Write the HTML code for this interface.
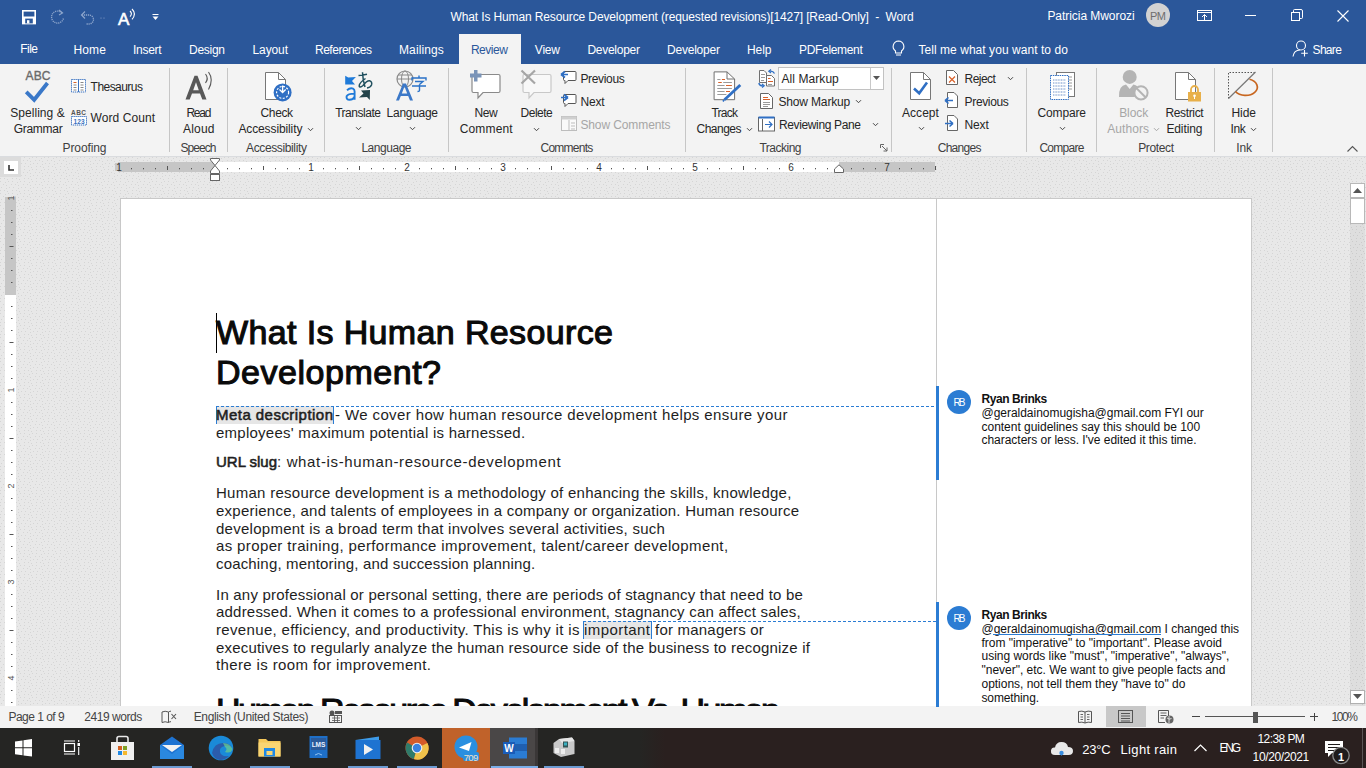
<!DOCTYPE html>
<html><head><meta charset="utf-8"><style>
html,body{margin:0;padding:0;width:1366px;height:768px;overflow:hidden;background:#fff;}
body{position:relative;font-family:"Liberation Sans",sans-serif;}
.t{position:absolute;white-space:pre;}
.r{position:absolute;}
svg.r{overflow:visible;}
</style></head><body>
<div class="r" style="left:0px;top:0px;width:1366px;height:64px;background:#2b579a;"></div>
<div class="r" style="left:0px;top:64px;width:1366px;height:92px;background:#f3f3f3;"></div>
<div class="r" style="left:0px;top:156px;width:1366px;height:1px;background:#dadcdf;"></div>
<svg class="r" style="left:0;top:157px" width="1366" height="549" shape-rendering="crispEdges"><defs><pattern id="dp" width="12" height="12" patternUnits="userSpaceOnUse"><rect width="12" height="12" fill="#e8e8e8"/><g fill="#d5d5d5"><rect x="0" y="0" width="1" height="1"/><rect x="5" y="1" width="1" height="1"/><rect x="8" y="0" width="1" height="1"/><rect x="3" y="3" width="1" height="1"/><rect x="6" y="4" width="1" height="1"/><rect x="11" y="3" width="1" height="1"/><rect x="1" y="6" width="1" height="1"/><rect x="6" y="7" width="1" height="1"/><rect x="9" y="6" width="1" height="1"/><rect x="4" y="9" width="1" height="1"/><rect x="7" y="10" width="1" height="1"/><rect x="0" y="9" width="1" height="1"/></g></pattern></defs><rect width="1366" height="549" fill="url(#dp)"/></svg>
<div class="r" style="left:0px;top:706px;width:1366px;height:22px;background:#f3f3f3;"></div>
<div class="r" style="left:0px;top:728px;width:1366px;height:40px;background:#2a201f;background:linear-gradient(90deg,#252523 0,#252523 640px,#2a201f 665px,#2a201f 100%);"></div>
<div class="t" style="left:450.50px;top:9.84px;font-size:12px;line-height:15px;color:#ffffff;font-weight:400;letter-spacing:-0.125px;">What Is Human Resource Development (requested revisions)[1427] [Read-Only]  -  Word</div>
<div class="t" style="left:1047.40px;top:9.34px;font-size:12px;line-height:15px;color:#ffffff;font-weight:400;letter-spacing:-0.049px;">Patricia Mworozi</div>
<svg class="r" style="left:1146px;top:3px;" width="24" height="24" viewBox="0 0 24 24"><circle cx="12" cy="12" r="12" fill="#d2d2d2"/></svg>
<div class="t" style="left:1150.00px;top:9.19px;font-size:11px;line-height:14px;color:#6e6e6e;font-weight:400;letter-spacing:-0.500px;">PM</div>
<svg class="r" style="left:1197px;top:10px;" width="15" height="11" viewBox="0 0 15 11"><rect x="0.5" y="0.5" width="14" height="10" fill="none" stroke="#fff" stroke-width="1"/><line x1="0.5" y1="2.5" x2="14.5" y2="2.5" stroke="#fff"/><path d="M7.5 4.5 L5 7 M7.5 4.5 L10 7 M7.5 4.5 V10" stroke="#fff" fill="none"/></svg>
<div class="r" style="left:1245px;top:15px;width:11px;height:1px;background:#fff;"></div>
<svg class="r" style="left:1291px;top:9px;" width="12" height="12" viewBox="0 0 12 12"><rect x="0.5" y="3.5" width="8" height="8" fill="none" stroke="#fff"/><path d="M2.5 3.5 V1.5 Q2.5 0.5 3.5 0.5 H10 Q11.5 0.5 11.5 2 V8.5 Q11.5 9.5 10.5 9.5 H8.5" fill="none" stroke="#fff"/></svg>
<svg class="r" style="left:1337px;top:10px;" width="12" height="12" viewBox="0 0 12 12"><path d="M0.5 0.5 L11.5 11.5 M11.5 0.5 L0.5 11.5" stroke="#fff" stroke-width="1.1"/></svg>
<svg class="r" style="left:21px;top:9px;" width="16" height="16" viewBox="0 0 16 16"><rect x="1.8" y="1.8" width="12.4" height="12.6" fill="none" stroke="#fff" stroke-width="1.6"/><rect x="1" y="7.5" width="14" height="7.7" fill="#fff"/><rect x="4.2" y="9.6" width="7.6" height="4.8" fill="#2b579a"/><rect x="6" y="11.2" width="2.4" height="3.2" fill="#fff"/></svg>
<svg class="r" style="left:50px;top:9px;" width="16" height="16" viewBox="0 0 16 16"><path d="M12 4 A6 6 0 1 0 13.5 9" fill="none" stroke="#8ea6cc" stroke-width="1.3" stroke-dasharray="1.2 0.8"/><path d="M9 1 L12.5 4 L9 6" fill="none" stroke="#8ea6cc" stroke-width="1.2"/></svg>
<svg class="r" style="left:79px;top:9px;" width="24" height="16" viewBox="0 0 24 16"><path d="M3 6 H10 A4.5 4.5 0 0 1 10 15 H7" fill="none" stroke="#8ea6cc" stroke-width="1.3" stroke-dasharray="1.2 0.8"/><path d="M6 2.5 L2.5 6 L6 9.5" fill="none" stroke="#8ea6cc" stroke-width="1.2"/><circle cx="22" cy="9" r="0.6" fill="#8ea6cc"/><circle cx="25" cy="9" r="0.6" fill="#8ea6cc"/></svg>
<div class="t" style="left:118.00px;top:9.11px;font-size:17px;line-height:21px;color:#ffffff;font-weight:400;letter-spacing:0.000px;-webkit-text-stroke:0.6px #fff;">A</div>
<svg class="r" style="left:129px;top:8px;" width="8" height="13" viewBox="0 0 8 13"><path d="M1 3 Q3.8 5.8 1 8.6" fill="none" stroke="#fff" stroke-width="1.1"/><path d="M3 1 Q7.8 5.8 3 11.4" fill="none" stroke="#fff" stroke-width="1.1"/></svg>
<svg class="r" style="left:152px;top:14px;" width="7" height="6" viewBox="0 0 7 6"><rect x="0.5" y="0" width="6" height="1" fill="#fff"/><path d="M0.5 2.5 H6.5 L3.5 6 Z" fill="#fff"/></svg>
<div class="t" style="left:20.20px;top:42.34px;font-size:12px;line-height:15px;color:#ffffff;font-weight:400;letter-spacing:-0.515px;">File</div>
<div class="t" style="left:73.40px;top:42.84px;font-size:12px;line-height:15px;color:#ffffff;font-weight:400;letter-spacing:0.195px;">Home</div>
<div class="t" style="left:133.00px;top:42.84px;font-size:12px;line-height:15px;color:#ffffff;font-weight:400;letter-spacing:-0.280px;">Insert</div>
<div class="t" style="left:189.00px;top:42.84px;font-size:12px;line-height:15px;color:#ffffff;font-weight:400;letter-spacing:-0.272px;">Design</div>
<div class="t" style="left:252.50px;top:42.84px;font-size:12px;line-height:15px;color:#ffffff;font-weight:400;letter-spacing:-0.103px;">Layout</div>
<div class="t" style="left:315.00px;top:42.84px;font-size:12px;line-height:15px;color:#ffffff;font-weight:400;letter-spacing:-0.484px;">References</div>
<div class="t" style="left:399.00px;top:42.84px;font-size:12px;line-height:15px;color:#ffffff;font-weight:400;letter-spacing:0.110px;">Mailings</div>
<div class="t" style="left:534.80px;top:42.84px;font-size:12px;line-height:15px;color:#ffffff;font-weight:400;letter-spacing:-0.199px;">View</div>
<div class="t" style="left:587.40px;top:42.84px;font-size:12px;line-height:15px;color:#ffffff;font-weight:400;letter-spacing:-0.263px;">Developer</div>
<div class="t" style="left:667.00px;top:42.84px;font-size:12px;line-height:15px;color:#ffffff;font-weight:400;letter-spacing:-0.213px;">Developer</div>
<div class="t" style="left:747.00px;top:42.84px;font-size:12px;line-height:15px;color:#ffffff;font-weight:400;letter-spacing:-0.062px;">Help</div>
<div class="t" style="left:799.00px;top:42.84px;font-size:12px;line-height:15px;color:#ffffff;font-weight:400;letter-spacing:-0.321px;">PDFelement</div>
<div class="r" style="left:459px;top:34px;width:62px;height:30px;background:#f3f3f3;"></div>
<div class="t" style="left:470.90px;top:42.84px;font-size:12px;line-height:15px;color:#2b579a;font-weight:400;letter-spacing:-0.472px;">Review</div>
<svg class="r" style="left:891px;top:40px;" width="15" height="18" viewBox="0 0 15 18"><path d="M7.5 1 A5.5 5.5 0 0 0 4.5 11 V13 H10.5 V11 A5.5 5.5 0 0 0 7.5 1 Z" fill="none" stroke="#fff" stroke-width="1.1"/><line x1="5" y1="15" x2="10" y2="15" stroke="#fff"/></svg>
<div class="t" style="left:918.40px;top:42.84px;font-size:12px;line-height:15px;color:#ffffff;font-weight:400;letter-spacing:0.053px;">Tell me what you want to do</div>
<svg class="r" style="left:1292px;top:40px;" width="18" height="17" viewBox="0 0 18 17"><circle cx="9" cy="5.5" r="4.5" fill="none" stroke="#fff" stroke-width="1.1"/><path d="M1 16.5 Q2 10 8 10" fill="none" stroke="#fff" stroke-width="1.1"/><path d="M12.5 10 V16.5 M9.2 13.2 H15.8" stroke="#fff" stroke-width="1.1"/></svg>
<div class="t" style="left:1312.60px;top:42.84px;font-size:12px;line-height:15px;color:#ffffff;font-weight:400;letter-spacing:-0.704px;">Share</div>
<div class="r" style="left:169px;top:68px;width:1px;height:84px;background:#c6c6c6;"></div>
<div class="r" style="left:227px;top:68px;width:1px;height:84px;background:#c6c6c6;"></div>
<div class="r" style="left:324px;top:68px;width:1px;height:84px;background:#c6c6c6;"></div>
<div class="r" style="left:448px;top:68px;width:1px;height:84px;background:#c6c6c6;"></div>
<div class="r" style="left:685px;top:68px;width:1px;height:84px;background:#c6c6c6;"></div>
<div class="r" style="left:891px;top:68px;width:1px;height:84px;background:#c6c6c6;"></div>
<div class="r" style="left:1026px;top:68px;width:1px;height:84px;background:#c6c6c6;"></div>
<div class="r" style="left:1096px;top:68px;width:1px;height:84px;background:#c6c6c6;"></div>
<div class="r" style="left:1214px;top:68px;width:1px;height:84px;background:#c6c6c6;"></div>
<div class="r" style="left:1272px;top:68px;width:1px;height:84px;background:#c6c6c6;"></div>
<div class="t" style="left:25.50px;top:69.34px;font-size:12px;line-height:15px;color:#6a6a6a;font-weight:400;letter-spacing:0.164px;-webkit-text-stroke:0.35px #6a6a6a;">ABC</div>
<svg class="r" style="left:24px;top:80px;" width="26" height="23" viewBox="0 0 26 23"><path d="M2.2 11.8 L10.2 19.8 L23.5 3" fill="none" stroke="#3a78c8" stroke-width="3.8"/></svg>
<div class="t" style="left:10.20px;top:106.14px;font-size:12px;line-height:15px;color:#262626;font-weight:400;letter-spacing:0.052px;">Spelling &amp;</div>
<div class="t" style="left:13.70px;top:122.04px;font-size:12px;line-height:15px;color:#262626;font-weight:400;letter-spacing:-0.279px;">Grammar</div>
<svg class="r" style="left:70px;top:78px;" width="17" height="15" viewBox="0 0 17 15"><rect x="1.5" y="1.5" width="14" height="12.5" fill="#fff" stroke="#3a72c0" stroke-dasharray="1.3 0.7"/><line x1="8.5" y1="1.5" x2="8.5" y2="14" stroke="#3a72c0"/><line x1="3.5" y1="4.5" x2="6.5" y2="4.5" stroke="#d9622b"/><line x1="3.5" y1="7" x2="6.5" y2="7" stroke="#888"/><line x1="3.5" y1="9.5" x2="6.5" y2="9.5" stroke="#888"/><line x1="3.5" y1="12" x2="6.5" y2="12" stroke="#888"/><line x1="10.5" y1="4.5" x2="13.5" y2="4.5" stroke="#888"/><line x1="10.5" y1="7" x2="13.5" y2="7" stroke="#888"/><line x1="10.5" y1="9.5" x2="13.5" y2="9.5" stroke="#888"/><line x1="10.5" y1="12" x2="13.5" y2="12" stroke="#888"/></svg>
<div class="t" style="left:90.60px;top:80.14px;font-size:12px;line-height:15px;color:#262626;font-weight:400;letter-spacing:-0.548px;">Thesaurus</div>
<div class="t" style="left:71.00px;top:108.75px;font-size:6.5px;line-height:8px;color:#555;font-weight:700;letter-spacing:0.469px;">ABC</div>
<svg class="r" style="left:70px;top:115px;" width="18" height="11" viewBox="0 0 18 11"><rect x="1.5" y="1.5" width="15" height="8.5" fill="#fff" stroke="#3a72c0" stroke-dasharray="1.3 0.7"/></svg>
<div class="t" style="left:73.50px;top:118.25px;font-size:6.5px;line-height:8px;color:#3a72c0;font-weight:700;letter-spacing:0.086px;">123</div>
<div class="t" style="left:90.60px;top:111.24px;font-size:12px;line-height:15px;color:#262626;font-weight:400;letter-spacing:0.067px;">Word Count</div>
<div class="t" style="left:62.60px;top:141.34px;font-size:12px;line-height:15px;color:#404040;font-weight:400;letter-spacing:-0.127px;">Proofing</div>
<svg class="r" style="left:184px;top:70px;" width="30" height="31" viewBox="0 0 30 31"><path d="M1.5 29.5 L10.5 5.8 L13.5 5.8 L22.5 29.5 L18.3 29.5 L16 23.5 L8 23.5 L5.7 29.5 Z M9.2 20.2 L14.8 20.2 L12 12.2 Z" fill="#585858" fill-rule="evenodd"/><path d="M21.5 4 Q25 8.5 21.5 13" fill="none" stroke="#585858" stroke-width="1.1"/><path d="M24.5 2 Q30 9.5 24.5 19.5" fill="none" stroke="#585858" stroke-width="1.1"/></svg>
<div class="t" style="left:186.40px;top:106.14px;font-size:12px;line-height:15px;color:#262626;font-weight:400;letter-spacing:-1.229px;">Read</div>
<div class="t" style="left:183.00px;top:122.04px;font-size:12px;line-height:15px;color:#262626;font-weight:400;letter-spacing:0.203px;">Aloud</div>
<div class="t" style="left:180.60px;top:141.34px;font-size:12px;line-height:15px;color:#404040;font-weight:400;letter-spacing:-0.997px;">Speech</div>
<svg class="r" style="left:264px;top:71px;" width="32" height="31" viewBox="0 0 32 31"><path d="M1.5 1.5 H14.5 L21.5 8.5 V28.5 H1.5 Z" fill="#fff" stroke="#777" stroke-width="1"/><path d="M14.5 1.5 V8.5 H21.5" fill="none" stroke="#777"/><circle cx="18.6" cy="21.4" r="9" fill="#2f6fc4"/><circle cx="18.6" cy="21.4" r="6" fill="none" stroke="#fff" stroke-width="1.2" stroke-dasharray="2 1.5"/><path d="M18.6 14.5 V21 M15.5 18.5 L18.6 21.5 L21.7 18.5" fill="none" stroke="#fff" stroke-width="1.3"/></svg>
<div class="t" style="left:260.60px;top:106.14px;font-size:12px;line-height:15px;color:#262626;font-weight:400;letter-spacing:-0.404px;">Check</div>
<div class="t" style="left:238.40px;top:122.04px;font-size:12px;line-height:15px;color:#262626;font-weight:400;letter-spacing:-0.113px;">Accessibility</div>
<svg class="r" style="left:307px;top:126.69999999999999px;" width="7" height="5" viewBox="0 0 7 5"><path d="M1 1.2 L3.5 3.7 L6 1.2" fill="none" stroke="#444" stroke-width="1"/></svg>
<div class="t" style="left:246.00px;top:141.34px;font-size:12px;line-height:15px;color:#404040;font-weight:400;letter-spacing:-0.372px;">Accessibility</div>
<svg class="r" style="left:344px;top:71px;" width="29" height="30" viewBox="0 0 29 30"><path d="M1.2 4.7 L4.2 6.4 L11.9 6.1 L8 10.1 L11 13.6 L1.2 13.6 Z" fill="#1e7ad9"/><path d="M3 19.2 Q6 16.6 9 17.6 Q10.6 18.4 10.6 20.5 V28.8 M10.4 22.6 Q4 22.6 2.6 25.2 Q2 28.6 5.6 28.8 Q9 28.8 10.4 26" fill="none" stroke="#1e7ad9" stroke-width="1.9"/><path d="M14.5 4.5 Q19 4.2 23 3.3 M18.5 1.2 Q18.8 9 21 16 M21.5 7.5 Q15 12 15.2 15 Q15.6 17.2 19 14.5 Q23 9.5 25.5 9.8 Q28.5 10.5 27.5 14 Q26.5 16.5 23 17" fill="none" stroke="#1f4f5e" stroke-width="1.5"/><path d="M17 19.5 L26 19 L25.8 28.9 L23 26 L15 26.5 L19.5 22.5 Z" fill="#23434a"/></svg>
<div class="t" style="left:335.20px;top:106.14px;font-size:12px;line-height:15px;color:#262626;font-weight:400;letter-spacing:-0.472px;">Translate</div>
<svg class="r" style="left:355px;top:126px;" width="7" height="5" viewBox="0 0 7 5"><path d="M1 1.2 L3.5 3.7 L6 1.2" fill="none" stroke="#444" stroke-width="1"/></svg>
<svg class="r" style="left:395px;top:70px;" width="34" height="32" viewBox="0 0 34 32"><circle cx="10" cy="9" r="8" fill="none" stroke="#8a8a8a" stroke-width="1.2"/><ellipse cx="10" cy="9" rx="3.5" ry="8" fill="none" stroke="#8a8a8a" stroke-width="1"/><line x1="2" y1="9" x2="18" y2="9" stroke="#8a8a8a"/><line x1="3" y1="5" x2="17" y2="5" stroke="#8a8a8a"/><path d="M1 30.5 L8 13.5 L11 13.5 L18 30.5 L15 30.5 L13.2 26 L5.8 26 L4 30.5 Z M6.8 23.5 L12.2 23.5 L9.5 16.5 Z" fill="#3b78c8" fill-rule="evenodd"/><path d="M24 5.5 V7.5 M17 10.5 V8 H31 V10.5 M20 11.5 H28 L24.5 14.5 M17 16 H31 M24.5 14.5 V20.5 Q24.5 21.5 22.5 21.5" fill="none" stroke="#2a72c8" stroke-width="1.4"/></svg>
<div class="t" style="left:386.60px;top:106.14px;font-size:12px;line-height:15px;color:#262626;font-weight:400;letter-spacing:-0.282px;">Language</div>
<svg class="r" style="left:408.5px;top:126px;" width="7" height="5" viewBox="0 0 7 5"><path d="M1 1.2 L3.5 3.7 L6 1.2" fill="none" stroke="#444" stroke-width="1"/></svg>
<div class="t" style="left:361.40px;top:141.34px;font-size:12px;line-height:15px;color:#404040;font-weight:400;letter-spacing:-0.468px;">Language</div>
<svg class="r" style="left:469px;top:69px;" width="33" height="31" viewBox="0 0 33 31"><path d="M3.5 5.5 H29.5 Q31 5.5 31 7 V22 Q31 23.5 29.5 23.5 H14 L9 29 L9 23.5 H4.5 Q3 23.5 3 22 V7 Q3 5.5 4.5 5.5 Z" fill="#fff" stroke="#8a8a8a" stroke-width="1.2"/><path d="M5 1 H8.5 V4.5 H12.5 V8.5 H8.5 V12.5 H5 V8.5 H1 V4.5 H5 Z" fill="#7a94b8"/></svg>
<div class="t" style="left:474.60px;top:106.14px;font-size:12px;line-height:15px;color:#262626;font-weight:400;letter-spacing:-0.408px;">New</div>
<div class="t" style="left:459.70px;top:122.04px;font-size:12px;line-height:15px;color:#262626;font-weight:400;letter-spacing:0.164px;">Comment</div>
<svg class="r" style="left:520px;top:69px;" width="33" height="31" viewBox="0 0 33 31"><path d="M4 5.5 H29.5 Q31 5.5 31 7 V22 Q31 23.5 29.5 23.5 H14 L9 29 L9 23.5 H4.5 Q3 23.5 3 22 V7 Q3 5.5 4 5.5 Z" fill="#f8f8f8" stroke="#c8c8c8" stroke-width="1.2"/><path d="M1.5 1.5 L15 14.5 M15 1.5 L1.5 14.5" stroke="#a6a6a6" stroke-width="2.2"/></svg>
<div class="t" style="left:520.60px;top:106.14px;font-size:12px;line-height:15px;color:#262626;font-weight:400;letter-spacing:-0.497px;">Delete</div>
<svg class="r" style="left:533.4px;top:126.69999999999999px;" width="7" height="5" viewBox="0 0 7 5"><path d="M1 1.2 L3.5 3.7 L6 1.2" fill="none" stroke="#444" stroke-width="1"/></svg>
<svg class="r" style="left:560px;top:70px;" width="17" height="15" viewBox="0 0 17 15"><path d="M4.5 1.5 H15 Q16 1.5 16 2.5 V9.5 Q16 10.5 15 10.5 H8 L5 13.5 V10.5 H4.5 Q3.5 10.5 3.5 9.5 V2.5 Q3.5 1.5 4.5 1.5 Z" fill="#fff" stroke="#555" stroke-width="1"/><path d="M1 4.5 L5 1.5 M1 4.5 L5 7.5 M1 4.5 H8" stroke="#2f6fc4" stroke-width="1.6" fill="none"/></svg>
<div class="t" style="left:580.40px;top:71.94px;font-size:12px;line-height:15px;color:#262626;font-weight:400;letter-spacing:-0.327px;">Previous</div>
<svg class="r" style="left:560px;top:93px;" width="17" height="15" viewBox="0 0 17 15"><path d="M4.5 1.5 H15 Q16 1.5 16 2.5 V9.5 Q16 10.5 15 10.5 H8 L5 13.5 V10.5 H4.5 Q3.5 10.5 3.5 9.5 V2.5 Q3.5 1.5 4.5 1.5 Z" fill="#fff" stroke="#555" stroke-width="1"/><path d="M8 4.5 L4 1.5 M8 4.5 L4 7.5 M1 4.5 H8" stroke="#2f6fc4" stroke-width="1.6" fill="none"/></svg>
<div class="t" style="left:580.40px;top:94.84px;font-size:12px;line-height:15px;color:#262626;font-weight:400;letter-spacing:-0.157px;">Next</div>
<svg class="r" style="left:561px;top:116px;" width="17" height="16" viewBox="0 0 17 16"><rect x="0.5" y="0.5" width="15" height="14" fill="#fafafa" stroke="#bdbdbd"/><rect x="0.5" y="0.5" width="15" height="3" fill="#cfcfcf"/><line x1="8" y1="4" x2="8" y2="14.5" stroke="#bdbdbd"/><line x1="10" y1="7" x2="14" y2="7" stroke="#bdbdbd"/><line x1="10" y1="10" x2="14" y2="10" stroke="#bdbdbd"/><line x1="10" y1="13" x2="14" y2="13" stroke="#bdbdbd"/></svg>
<div class="t" style="left:580.40px;top:117.84px;font-size:12px;line-height:15px;color:#a6a6a6;font-weight:400;letter-spacing:-0.105px;">Show Comments</div>
<div class="t" style="left:540.50px;top:141.34px;font-size:12px;line-height:15px;color:#404040;font-weight:400;letter-spacing:-0.759px;">Comments</div>
<svg class="r" style="left:712px;top:71px;" width="31" height="32" viewBox="0 0 31 32"><path d="M2.1 0.9 H15 L22.6 8 V28.7 H2.1 Z" fill="#fff" stroke="#707070"/><path d="M15 0.9 V8 H22.6" fill="none" stroke="#707070"/><line x1="5.3" y1="8.5" x2="8.5" y2="8.5" stroke="#9a9a9a" stroke-width="1"/><line x1="9.9" y1="8.5" x2="13" y2="8.5" stroke="#d9622b" stroke-width="1"/><line x1="6.2" y1="11.5" x2="9.8" y2="11.5" stroke="#d9622b" stroke-width="1"/><line x1="11.2" y1="11.5" x2="19.9" y2="11.5" stroke="#9a9a9a" stroke-width="1"/><line x1="5.3" y1="14.5" x2="12.6" y2="14.5" stroke="#9a9a9a" stroke-width="1"/><line x1="14" y1="14.5" x2="19.9" y2="14.5" stroke="#d9622b" stroke-width="1"/><line x1="5.3" y1="17.5" x2="19.9" y2="17.5" stroke="#9a9a9a" stroke-width="1"/><line x1="5.3" y1="20.5" x2="12.6" y2="20.5" stroke="#9a9a9a" stroke-width="1"/><line x1="14" y1="20.5" x2="18" y2="20.5" stroke="#d9622b" stroke-width="1"/><line x1="5.3" y1="23.5" x2="14.4" y2="23.5" stroke="#9a9a9a" stroke-width="1"/><path d="M12.5 28.8 L28.3 13.9" stroke="#2f6fc4" stroke-width="2.8"/><path d="M10.8 30.4 L12.3 29" stroke="#2f6fc4" stroke-width="1.6"/></svg>
<div class="t" style="left:711.50px;top:106.14px;font-size:12px;line-height:15px;color:#262626;font-weight:400;letter-spacing:-0.766px;">Track</div>
<div class="t" style="left:696.50px;top:122.04px;font-size:12px;line-height:15px;color:#262626;font-weight:400;letter-spacing:-0.505px;">Changes</div>
<svg class="r" style="left:746.2px;top:126.69999999999999px;" width="7" height="5" viewBox="0 0 7 5"><path d="M1 1.2 L3.5 3.7 L6 1.2" fill="none" stroke="#444" stroke-width="1"/></svg>
<svg class="r" style="left:758px;top:69px;" width="18" height="19" viewBox="0 0 18 19"><path d="M1.5 1.5 H6 L8.5 4 V13.5 H1.5 Z" fill="#fff" stroke="#707070"/><line x1="3" y1="5.5" x2="7" y2="5.5" stroke="#9a9a9a"/><line x1="3" y1="8.5" x2="7" y2="8.5" stroke="#9a9a9a"/><line x1="3" y1="11.5" x2="6" y2="11.5" stroke="#9a9a9a"/><path d="M8.5 6.5 H13.5 L16.5 9.5 V17 H8.5 Z" fill="#fff" stroke="#707070"/><line x1="10" y1="9.5" x2="12.5" y2="9.5" stroke="#d9622b"/><line x1="10" y1="12.5" x2="15" y2="12.5" stroke="#d9622b"/><line x1="10" y1="15.5" x2="14" y2="15.5" stroke="#9a9a9a"/><path d="M16.5 4.5 Q15 1.5 11.5 2.2" fill="none" stroke="#2f6fc4" stroke-width="1.3"/><path d="M13 0.5 L10.8 2.3 L13 4" fill="none" stroke="#2f6fc4" stroke-width="1.2"/><path d="M0.8 14 Q1.5 17.2 5.5 16.8" fill="none" stroke="#2f6fc4" stroke-width="1.3"/><path d="M4 15 L6.2 16.8 L4 18.5" fill="none" stroke="#2f6fc4" stroke-width="1.2"/></svg>
<div class="r" style="left:778px;top:67px;width:106px;height:23px;background:#fff;box-sizing:border-box;border:1px solid #c2c2c2;"></div>
<div class="r" style="left:870px;top:68px;width:1px;height:21px;background:#c8c8c8;"></div>
<svg class="r" style="left:873px;top:76px;" width="7" height="4" viewBox="0 0 7 4"><path d="M0 0 H7 L3.5 4 Z" fill="#555"/></svg>
<div class="t" style="left:781.50px;top:71.94px;font-size:12px;line-height:15px;color:#262626;font-weight:400;letter-spacing:0.068px;">All Markup</div>
<svg class="r" style="left:760px;top:93px;" width="13" height="16" viewBox="0 0 13 16"><path d="M0.5 0.5 H8.5 L12.5 4.5 V15.5 H0.5 Z" fill="#fff" stroke="#666"/><line x1="3" y1="4.5" x2="8" y2="4.5" stroke="#d9622b"/><line x1="3" y1="6.5" x2="10" y2="6.5" stroke="#d9622b"/><line x1="3" y1="9.5" x2="10" y2="9.5" stroke="#9a9a9a"/><line x1="3" y1="11.5" x2="10" y2="11.5" stroke="#9a9a9a"/><line x1="3" y1="13.5" x2="8" y2="13.5" stroke="#9a9a9a"/></svg>
<div class="t" style="left:778.40px;top:94.84px;font-size:12px;line-height:15px;color:#262626;font-weight:400;letter-spacing:-0.146px;">Show Markup</div>
<svg class="r" style="left:855.3px;top:99px;" width="7" height="5" viewBox="0 0 7 5"><path d="M1 1.2 L3.5 3.7 L6 1.2" fill="none" stroke="#444" stroke-width="1"/></svg>
<svg class="r" style="left:758px;top:116px;" width="18" height="16" viewBox="0 0 18 16"><rect x="0.5" y="1.5" width="16" height="13.5" fill="#fff" stroke="#666"/><rect x="0.5" y="0.5" width="16" height="2" fill="#2f6fc4"/><line x1="4.5" y1="3" x2="4.5" y2="15" stroke="#666"/><path d="M7 8.5 H14 M11 5.5 L14 8.5 L11 11.5" fill="none" stroke="#2f6fc4" stroke-width="1.2"/></svg>
<div class="t" style="left:778.90px;top:117.84px;font-size:12px;line-height:15px;color:#262626;font-weight:400;letter-spacing:-0.355px;">Reviewing Pane</div>
<svg class="r" style="left:872.2px;top:122px;" width="7" height="5" viewBox="0 0 7 5"><path d="M1 1.2 L3.5 3.7 L6 1.2" fill="none" stroke="#444" stroke-width="1"/></svg>
<div class="t" style="left:759.50px;top:141.34px;font-size:12px;line-height:15px;color:#404040;font-weight:400;letter-spacing:-0.511px;">Tracking</div>
<svg class="r" style="left:880px;top:144px;" width="8" height="8" viewBox="0 0 8 8"><path d="M0.5 0.5 H4 M0.5 0.5 V4 M2 2 L7 7 M7 3.5 V7 H3.5" fill="none" stroke="#666"/></svg>
<svg class="r" style="left:909px;top:71px;" width="23" height="30" viewBox="0 0 23 30"><path d="M1.5 1.5 H14.5 L21.5 8.5 V28.5 H1.5 Z" fill="#fff" stroke="#777"/><path d="M14.5 1.5 V8.5 H21.5" fill="none" stroke="#777"/><path d="M5 17.5 L10.2 22.2 L18 11.5" fill="none" stroke="#2f6fc4" stroke-width="2.6"/></svg>
<div class="t" style="left:902.00px;top:106.14px;font-size:12px;line-height:15px;color:#262626;font-weight:400;letter-spacing:0.046px;">Accept</div>
<svg class="r" style="left:917.7px;top:125.8px;" width="7" height="5" viewBox="0 0 7 5"><path d="M1 1.2 L3.5 3.7 L6 1.2" fill="none" stroke="#444" stroke-width="1"/></svg>
<svg class="r" style="left:946px;top:70px;" width="13" height="16" viewBox="0 0 13 16"><path d="M0.5 0.5 H7.5 L11.5 4.5 V14.5 H0.5 Z" fill="#fff" stroke="#666"/><path d="M3 6.5 L9 12.5 M9 6.5 L3 12.5" stroke="#d9622b" stroke-width="1.2"/></svg>
<div class="t" style="left:964.60px;top:71.94px;font-size:12px;line-height:15px;color:#262626;font-weight:400;letter-spacing:-0.563px;">Reject</div>
<svg class="r" style="left:1007px;top:75.6px;" width="7" height="5" viewBox="0 0 7 5"><path d="M1 1.2 L3.5 3.7 L6 1.2" fill="none" stroke="#444" stroke-width="1"/></svg>
<svg class="r" style="left:944px;top:92px;" width="15" height="17" viewBox="0 0 15 17"><path d="M3.5 0.5 H10 L13.5 4 V15.5 H3.5 Z" fill="#fff" stroke="#666"/><path d="M1 8.5 L4.5 5.5 M1 8.5 L4.5 11.5 M1 8.5 H9" fill="none" stroke="#2f6fc4" stroke-width="1.6"/></svg>
<div class="t" style="left:964.60px;top:94.84px;font-size:12px;line-height:15px;color:#262626;font-weight:400;letter-spacing:-0.355px;">Previous</div>
<svg class="r" style="left:944px;top:115px;" width="15" height="17" viewBox="0 0 15 17"><path d="M3.5 0.5 H10 L13.5 4 V15.5 H3.5 Z" fill="#fff" stroke="#666"/><path d="M9 8.5 L5.5 5.5 M9 8.5 L5.5 11.5 M1 8.5 H9" fill="none" stroke="#2f6fc4" stroke-width="1.6"/></svg>
<div class="t" style="left:964.60px;top:117.84px;font-size:12px;line-height:15px;color:#262626;font-weight:400;letter-spacing:-0.157px;">Next</div>
<div class="t" style="left:937.70px;top:141.34px;font-size:12px;line-height:15px;color:#404040;font-weight:400;letter-spacing:-0.705px;">Changes</div>
<svg class="r" style="left:1049px;top:71px;" width="27" height="30" viewBox="0 0 27 30"><rect x="7.5" y="1.5" width="18" height="24" fill="#fff" stroke="#777"/><line x1="10" y1="6" x2="23" y2="6" stroke="#999"/><line x1="10" y1="9" x2="23" y2="9" stroke="#999"/><line x1="10" y1="12" x2="23" y2="12" stroke="#999"/><line x1="10" y1="15" x2="23" y2="15" stroke="#999"/><line x1="10" y1="18" x2="23" y2="18" stroke="#999"/><rect x="1.5" y="4.5" width="18" height="24" fill="#fff" stroke="#2f6fc4" stroke-dasharray="1.5 0.8"/><line x1="4" y1="9" x2="17" y2="9" stroke="#6a8fc8" stroke-dasharray="1 0.6"/><line x1="4" y1="12" x2="17" y2="12" stroke="#6a8fc8" stroke-dasharray="1 0.6"/><line x1="4" y1="15" x2="17" y2="15" stroke="#6a8fc8" stroke-dasharray="1 0.6"/><line x1="4" y1="18" x2="17" y2="18" stroke="#6a8fc8" stroke-dasharray="1 0.6"/><line x1="4" y1="21" x2="17" y2="21" stroke="#6a8fc8" stroke-dasharray="1 0.6"/><line x1="4" y1="24" x2="17" y2="24" stroke="#6a8fc8" stroke-dasharray="1 0.6"/></svg>
<div class="t" style="left:1037.60px;top:106.14px;font-size:12px;line-height:15px;color:#262626;font-weight:400;letter-spacing:-0.160px;">Compare</div>
<svg class="r" style="left:1059.2px;top:125.8px;" width="7" height="5" viewBox="0 0 7 5"><path d="M1 1.2 L3.5 3.7 L6 1.2" fill="none" stroke="#444" stroke-width="1"/></svg>
<div class="t" style="left:1039.40px;top:141.34px;font-size:12px;line-height:15px;color:#404040;font-weight:400;letter-spacing:-0.710px;">Compare</div>
<svg class="r" style="left:1117px;top:69px;" width="35" height="33" viewBox="0 0 35 33"><circle cx="12.7" cy="7.9" r="7" fill="#b4b4b4"/><path d="M2 28 Q1.5 16.5 9 15.5 L12.7 20 L16.4 15.5 Q19 15.8 20.5 17.5 Q17 21 17.5 26 L18 28 Z" fill="#b4b4b4"/><circle cx="24" cy="23.8" r="6.6" fill="#f3f3f3" stroke="#b4b4b4" stroke-width="2"/><line x1="19.5" y1="19.3" x2="28.5" y2="28.3" stroke="#b4b4b4" stroke-width="2"/></svg>
<div class="t" style="left:1119.20px;top:106.14px;font-size:12px;line-height:15px;color:#a6a6a6;font-weight:400;letter-spacing:-0.086px;">Block</div>
<div class="t" style="left:1107.30px;top:122.04px;font-size:12px;line-height:15px;color:#a6a6a6;font-weight:400;letter-spacing:0.059px;">Authors</div>
<svg class="r" style="left:1153px;top:126.69999999999999px;" width="7" height="5" viewBox="0 0 7 5"><path d="M1 1.2 L3.5 3.7 L6 1.2" fill="none" stroke="#a6a6a6" stroke-width="1"/></svg>
<svg class="r" style="left:1174px;top:71px;" width="29" height="32" viewBox="0 0 29 32"><path d="M1.5 1.5 H14.5 L21.5 8.5 V28.5 H1.5 Z" fill="#fff" stroke="#777"/><path d="M14.5 1.5 V8.5 H21.5" fill="none" stroke="#777"/><path d="M17 21 V18.5 A3.5 3.5 0 0 1 24 18.5 V21" fill="none" stroke="#e8b04a" stroke-width="1.8"/><rect x="14" y="21" width="13" height="9.5" fill="#e8b04a"/><circle cx="20.5" cy="24.8" r="1.3" fill="#fff"/><rect x="20" y="25" width="1" height="3" fill="#fff"/></svg>
<div class="t" style="left:1165.40px;top:106.14px;font-size:12px;line-height:15px;color:#262626;font-weight:400;letter-spacing:-0.339px;">Restrict</div>
<div class="t" style="left:1166.40px;top:122.04px;font-size:12px;line-height:15px;color:#262626;font-weight:400;letter-spacing:-0.098px;">Editing</div>
<div class="t" style="left:1138.20px;top:141.34px;font-size:12px;line-height:15px;color:#404040;font-weight:400;letter-spacing:-0.367px;">Protect</div>
<svg class="r" style="left:1227px;top:71px;" width="34" height="29" viewBox="0 0 34 29"><path d="M1.5 27.5 V1.5 H28" fill="none" stroke="#555" stroke-dasharray="1.5 1.5"/><path d="M1.5 27.5 L28.5 1" stroke="#777" stroke-width="1.2"/><path d="M22.5 8.3 A11.8 8.3 0 1 1 8.5 20.5" fill="none" stroke="#c8661f" stroke-width="1.7"/><path d="M1.5 27.5 L6 1.5" stroke="none"/></svg>
<div class="t" style="left:1231.50px;top:106.14px;font-size:12px;line-height:15px;color:#262626;font-weight:400;letter-spacing:-0.062px;">Hide</div>
<div class="t" style="left:1230.50px;top:122.04px;font-size:12px;line-height:15px;color:#262626;font-weight:400;letter-spacing:-0.350px;">Ink</div>
<svg class="r" style="left:1250.1px;top:126.69999999999999px;" width="7" height="5" viewBox="0 0 7 5"><path d="M1 1.2 L3.5 3.7 L6 1.2" fill="none" stroke="#444" stroke-width="1"/></svg>
<div class="t" style="left:1236.20px;top:141.34px;font-size:12px;line-height:15px;color:#404040;font-weight:400;letter-spacing:-0.050px;">Ink</div>
<svg class="r" style="left:1347px;top:146px;" width="11" height="6" viewBox="0 0 11 6"><path d="M0.5 5.5 L5.5 0.5 L10.5 5.5" fill="none" stroke="#555" stroke-width="1.1"/></svg>
<div class="r" style="left:0px;top:157px;width:21px;height:20px;background:#dcdcdc;"></div>
<div class="r" style="left:4px;top:161px;width:14px;height:13px;background:#ffffff;"></div>
<svg class="r" style="left:8px;top:165px;" width="6" height="6" viewBox="0 0 6 6"><path d="M1 0 V5 H6" fill="none" stroke="#333" stroke-width="1.6"/></svg>
<div class="r" style="left:118px;top:162px;width:97px;height:10px;background:#c6c6c6;"></div>
<div class="r" style="left:215px;top:162px;width:624px;height:10px;background:#ffffff;"></div>
<div class="r" style="left:839px;top:162px;width:96px;height:10px;background:#c6c6c6;"></div>
<svg class="r" style="left:119px;top:162px;" width="816" height="10" viewBox="0 0 816 10"><rect x="12" y="6" width="1" height="1.3" fill="#555"/><rect x="24" y="6" width="1" height="1.3" fill="#555"/><rect x="36" y="6" width="1" height="1.3" fill="#555"/><rect x="48" y="4" width="1" height="4" fill="#555"/><rect x="60" y="6" width="1" height="1.3" fill="#555"/><rect x="72" y="6" width="1" height="1.3" fill="#555"/><rect x="84" y="6" width="1" height="1.3" fill="#555"/><rect x="108" y="6" width="1" height="1.3" fill="#555"/><rect x="120" y="6" width="1" height="1.3" fill="#555"/><rect x="132" y="6" width="1" height="1.3" fill="#555"/><rect x="144" y="4" width="1" height="4" fill="#555"/><rect x="156" y="6" width="1" height="1.3" fill="#555"/><rect x="168" y="6" width="1" height="1.3" fill="#555"/><rect x="180" y="6" width="1" height="1.3" fill="#555"/><rect x="204" y="6" width="1" height="1.3" fill="#555"/><rect x="216" y="6" width="1" height="1.3" fill="#555"/><rect x="228" y="6" width="1" height="1.3" fill="#555"/><rect x="240" y="4" width="1" height="4" fill="#555"/><rect x="252" y="6" width="1" height="1.3" fill="#555"/><rect x="264" y="6" width="1" height="1.3" fill="#555"/><rect x="276" y="6" width="1" height="1.3" fill="#555"/><rect x="300" y="6" width="1" height="1.3" fill="#555"/><rect x="312" y="6" width="1" height="1.3" fill="#555"/><rect x="324" y="6" width="1" height="1.3" fill="#555"/><rect x="336" y="4" width="1" height="4" fill="#555"/><rect x="348" y="6" width="1" height="1.3" fill="#555"/><rect x="360" y="6" width="1" height="1.3" fill="#555"/><rect x="372" y="6" width="1" height="1.3" fill="#555"/><rect x="396" y="6" width="1" height="1.3" fill="#555"/><rect x="408" y="6" width="1" height="1.3" fill="#555"/><rect x="420" y="6" width="1" height="1.3" fill="#555"/><rect x="432" y="4" width="1" height="4" fill="#555"/><rect x="444" y="6" width="1" height="1.3" fill="#555"/><rect x="456" y="6" width="1" height="1.3" fill="#555"/><rect x="468" y="6" width="1" height="1.3" fill="#555"/><rect x="492" y="6" width="1" height="1.3" fill="#555"/><rect x="504" y="6" width="1" height="1.3" fill="#555"/><rect x="516" y="6" width="1" height="1.3" fill="#555"/><rect x="528" y="4" width="1" height="4" fill="#555"/><rect x="540" y="6" width="1" height="1.3" fill="#555"/><rect x="552" y="6" width="1" height="1.3" fill="#555"/><rect x="564" y="6" width="1" height="1.3" fill="#555"/><rect x="588" y="6" width="1" height="1.3" fill="#555"/><rect x="600" y="6" width="1" height="1.3" fill="#555"/><rect x="612" y="6" width="1" height="1.3" fill="#555"/><rect x="624" y="4" width="1" height="4" fill="#555"/><rect x="636" y="6" width="1" height="1.3" fill="#555"/><rect x="648" y="6" width="1" height="1.3" fill="#555"/><rect x="660" y="6" width="1" height="1.3" fill="#555"/><rect x="684" y="6" width="1" height="1.3" fill="#555"/><rect x="696" y="6" width="1" height="1.3" fill="#555"/><rect x="708" y="6" width="1" height="1.3" fill="#555"/><rect x="720" y="4" width="1" height="4" fill="#555"/><rect x="732" y="6" width="1" height="1.3" fill="#555"/><rect x="744" y="6" width="1" height="1.3" fill="#555"/><rect x="756" y="6" width="1" height="1.3" fill="#555"/><rect x="780" y="6" width="1" height="1.3" fill="#555"/><rect x="792" y="6" width="1" height="1.3" fill="#555"/><rect x="804" y="6" width="1" height="1.3" fill="#555"/><rect x="816" y="4" width="1" height="4" fill="#555"/></svg>
<div class="r" style="left:115px;top:163px;width:9px;height:8px;background:#c6c6c6;"></div>
<div class="t" style="left:116.22px;top:162.03px;font-size:10px;line-height:12px;color:#333;font-weight:400;letter-spacing:0.000px;">1</div>
<div class="r" style="left:307px;top:163px;width:9px;height:8px;background:#ffffff;"></div>
<div class="t" style="left:308.22px;top:162.03px;font-size:10px;line-height:12px;color:#333;font-weight:400;letter-spacing:0.000px;">1</div>
<div class="r" style="left:403px;top:163px;width:9px;height:8px;background:#ffffff;"></div>
<div class="t" style="left:404.22px;top:162.03px;font-size:10px;line-height:12px;color:#333;font-weight:400;letter-spacing:0.000px;">2</div>
<div class="r" style="left:499px;top:163px;width:9px;height:8px;background:#ffffff;"></div>
<div class="t" style="left:500.22px;top:162.03px;font-size:10px;line-height:12px;color:#333;font-weight:400;letter-spacing:0.000px;">3</div>
<div class="r" style="left:595px;top:163px;width:9px;height:8px;background:#ffffff;"></div>
<div class="t" style="left:596.22px;top:162.03px;font-size:10px;line-height:12px;color:#333;font-weight:400;letter-spacing:0.000px;">4</div>
<div class="r" style="left:691px;top:163px;width:9px;height:8px;background:#ffffff;"></div>
<div class="t" style="left:692.22px;top:162.03px;font-size:10px;line-height:12px;color:#333;font-weight:400;letter-spacing:0.000px;">5</div>
<div class="r" style="left:787px;top:163px;width:9px;height:8px;background:#ffffff;"></div>
<div class="t" style="left:788.22px;top:162.03px;font-size:10px;line-height:12px;color:#333;font-weight:400;letter-spacing:0.000px;">6</div>
<div class="r" style="left:883px;top:163px;width:9px;height:8px;background:#c6c6c6;"></div>
<div class="t" style="left:884.22px;top:162.03px;font-size:10px;line-height:12px;color:#333;font-weight:400;letter-spacing:0.000px;">7</div>
<svg class="r" style="left:210px;top:158px;" width="11" height="24" viewBox="0 0 11 24"><path d="M0.5 0.5 H9.5 V2 L5 7.5 L9.5 13 V15.5 H0.5 V13 L5 7.5 L0.5 2 Z" fill="#fff" stroke="#666"/><rect x="0.5" y="16.5" width="9" height="6" fill="#fff" stroke="#666"/></svg>
<svg class="r" style="left:834px;top:164px;" width="11" height="9" viewBox="0 0 11 9"><path d="M0.5 8.5 V5 L5 0.8 L9.5 5 V8.5 Z" fill="#fff" stroke="#666"/></svg>
<div class="r" style="left:5px;top:197px;width:11px;height:509px;background:#c6c6c6;"></div>
<div class="r" style="left:5px;top:295px;width:11px;height:411px;background:#ffffff;"></div>
<svg class="r" style="left:5px;top:197px;" width="11" height="509" viewBox="0 0 11 509"><rect x="6" y="13" width="1.5" height="1" fill="#555"/><rect x="6" y="25" width="1.5" height="1" fill="#555"/><rect x="6" y="37" width="1.5" height="1" fill="#555"/><rect x="4.5" y="49" width="4" height="1" fill="#555"/><rect x="6" y="61" width="1.5" height="1" fill="#555"/><rect x="6" y="73" width="1.5" height="1" fill="#555"/><rect x="6" y="85" width="1.5" height="1" fill="#555"/><rect x="6" y="109" width="1.5" height="1" fill="#555"/><rect x="6" y="121" width="1.5" height="1" fill="#555"/><rect x="6" y="133" width="1.5" height="1" fill="#555"/><rect x="4.5" y="145" width="4" height="1" fill="#555"/><rect x="6" y="157" width="1.5" height="1" fill="#555"/><rect x="6" y="169" width="1.5" height="1" fill="#555"/><rect x="6" y="181" width="1.5" height="1" fill="#555"/><rect x="6" y="205" width="1.5" height="1" fill="#555"/><rect x="6" y="217" width="1.5" height="1" fill="#555"/><rect x="6" y="229" width="1.5" height="1" fill="#555"/><rect x="4.5" y="241" width="4" height="1" fill="#555"/><rect x="6" y="253" width="1.5" height="1" fill="#555"/><rect x="6" y="265" width="1.5" height="1" fill="#555"/><rect x="6" y="277" width="1.5" height="1" fill="#555"/><rect x="6" y="301" width="1.5" height="1" fill="#555"/><rect x="6" y="313" width="1.5" height="1" fill="#555"/><rect x="6" y="325" width="1.5" height="1" fill="#555"/><rect x="4.5" y="337" width="4" height="1" fill="#555"/><rect x="6" y="349" width="1.5" height="1" fill="#555"/><rect x="6" y="361" width="1.5" height="1" fill="#555"/><rect x="6" y="373" width="1.5" height="1" fill="#555"/><rect x="6" y="397" width="1.5" height="1" fill="#555"/><rect x="6" y="409" width="1.5" height="1" fill="#555"/><rect x="6" y="421" width="1.5" height="1" fill="#555"/><rect x="4.5" y="433" width="4" height="1" fill="#555"/><rect x="6" y="445" width="1.5" height="1" fill="#555"/><rect x="6" y="457" width="1.5" height="1" fill="#555"/><rect x="6" y="469" width="1.5" height="1" fill="#555"/><rect x="6" y="493" width="1.5" height="1" fill="#555"/><rect x="6" y="505" width="1.5" height="1" fill="#555"/></svg>
<svg class="r" style="left:6px;top:194px;" width="9" height="8" viewBox="0 0 9 8"><text x="4.5" y="7.5" transform="rotate(-90 4.5 4)" font-family="Liberation Sans" font-size="9" fill="#555" text-anchor="middle">1</text></svg>
<svg class="r" style="left:6px;top:386px;" width="9" height="8" viewBox="0 0 9 8"><text x="4.5" y="7.5" transform="rotate(-90 4.5 4)" font-family="Liberation Sans" font-size="9" fill="#555" text-anchor="middle">1</text></svg>
<svg class="r" style="left:6px;top:482px;" width="9" height="8" viewBox="0 0 9 8"><text x="4.5" y="7.5" transform="rotate(-90 4.5 4)" font-family="Liberation Sans" font-size="9" fill="#555" text-anchor="middle">2</text></svg>
<svg class="r" style="left:6px;top:578px;" width="9" height="8" viewBox="0 0 9 8"><text x="4.5" y="7.5" transform="rotate(-90 4.5 4)" font-family="Liberation Sans" font-size="9" fill="#555" text-anchor="middle">3</text></svg>
<svg class="r" style="left:6px;top:674px;" width="9" height="8" viewBox="0 0 9 8"><text x="4.5" y="7.5" transform="rotate(-90 4.5 4)" font-family="Liberation Sans" font-size="9" fill="#555" text-anchor="middle">4</text></svg>
<div class="r" style="left:120px;top:198px;width:1132px;height:508px;background:#ffffff;box-sizing:border-box;border-left:1px solid #c8c8c8;border-top:1px solid #c8c8c8;border-right:1px solid #c8c8c8;"></div>
<div class="r" style="left:936px;top:199px;width:1px;height:507px;background:#c8c8c8;"></div>
<div class="r" style="left:216px;top:313px;width:1px;height:40px;background:#000;"></div>
<div class="t" style="left:216.00px;top:310.92px;font-size:34px;line-height:42px;color:#0a0a0a;font-weight:400;letter-spacing:0.368px;-webkit-text-stroke:1.1px #0a0a0a;">What Is Human Resource</div>
<div class="t" style="left:216.00px;top:351.12px;font-size:34px;line-height:42px;color:#0a0a0a;font-weight:400;letter-spacing:0.526px;-webkit-text-stroke:1.1px #0a0a0a;">Development?</div>
<div class="r" style="left:216px;top:406px;width:118px;height:18px;background:#e6e6e6;"></div>
<div class="r" style="left:216px;top:406px;width:1px;height:18px;background:#2b7cd3;"></div>
<div class="r" style="left:333px;top:406px;width:1px;height:18px;background:#2b7cd3;"></div>
<div class="t" style="left:216.00px;top:404.90px;font-size:15px;line-height:19px;color:#1e1e1e;font-weight:400;letter-spacing:0.461px;-webkit-text-stroke:0.55px #1e1e1e;">Meta description</div>
<div class="t" style="left:335.00px;top:404.90px;font-size:15px;line-height:19px;color:#1e1e1e;font-weight:400;letter-spacing:0.387px;">- We cover how human resource development helps ensure your</div>
<svg class="r" style="left:216px;top:405px;" width="721" height="2" viewBox="0 0 721 2"><line x1="0" y1="1.5" x2="721" y2="1.5" stroke="#2b7cd3" stroke-width="1" stroke-dasharray="3 2"/></svg>
<div class="t" style="left:216.00px;top:422.50px;font-size:15px;line-height:19px;color:#1e1e1e;font-weight:400;letter-spacing:0.251px;">employees&#x27; maximum potential is harnessed.</div>
<div class="t" style="left:216.00px;top:452.20px;font-size:15px;line-height:19px;color:#1e1e1e;font-weight:400;letter-spacing:-0.018px;-webkit-text-stroke:0.55px #1e1e1e;">URL slug</div>
<div class="t" style="left:277.00px;top:452.20px;font-size:15px;line-height:19px;color:#1e1e1e;font-weight:400;letter-spacing:0.648px;">: what-is-human-resource-development</div>
<div class="t" style="left:216.00px;top:483.40px;font-size:15px;line-height:19px;color:#1e1e1e;font-weight:400;letter-spacing:0.268px;">Human resource development is a methodology of enhancing the skills, knowledge,</div>
<div class="t" style="left:216.00px;top:500.98px;font-size:15px;line-height:19px;color:#1e1e1e;font-weight:400;letter-spacing:0.232px;">experience, and talents of employees in a company or organization. Human resource</div>
<div class="t" style="left:216.00px;top:518.56px;font-size:15px;line-height:19px;color:#1e1e1e;font-weight:400;letter-spacing:0.262px;">development is a broad term that involves several activities, such</div>
<div class="t" style="left:216.00px;top:536.14px;font-size:15px;line-height:19px;color:#1e1e1e;font-weight:400;letter-spacing:0.371px;">as proper training, performance improvement, talent/career development,</div>
<div class="t" style="left:216.00px;top:553.72px;font-size:15px;line-height:19px;color:#1e1e1e;font-weight:400;letter-spacing:0.168px;">coaching, mentoring, and succession planning.</div>
<div class="t" style="left:216.00px;top:584.90px;font-size:15px;line-height:19px;color:#1e1e1e;font-weight:400;letter-spacing:0.211px;">In any professional or personal setting, there are periods of stagnancy that need to be</div>
<div class="t" style="left:216.00px;top:602.48px;font-size:15px;line-height:19px;color:#1e1e1e;font-weight:400;letter-spacing:0.209px;">addressed. When it comes to a professional environment, stagnancy can affect sales,</div>
<div class="r" style="left:583px;top:621px;width:69px;height:18px;background:#e6e6e6;"></div>
<div class="r" style="left:583px;top:621px;width:1px;height:18px;background:#2b7cd3;"></div>
<div class="r" style="left:651px;top:621px;width:1px;height:18px;background:#2b7cd3;"></div>
<div class="t" style="left:216.00px;top:620.06px;font-size:15px;line-height:19px;color:#1e1e1e;font-weight:400;letter-spacing:0.337px;">revenue, efficiency, and productivity. This is why it is</div>
<div class="t" style="left:584.00px;top:620.06px;font-size:15px;line-height:19px;color:#1e1e1e;font-weight:400;letter-spacing:0.432px;">important</div>
<div class="t" style="left:655.00px;top:620.06px;font-size:15px;line-height:19px;color:#1e1e1e;font-weight:400;letter-spacing:0.213px;">for managers or</div>
<svg class="r" style="left:583px;top:620px;" width="354" height="2" viewBox="0 0 354 2"><line x1="0" y1="1.5" x2="354" y2="1.5" stroke="#2b7cd3" stroke-width="1" stroke-dasharray="3 2"/></svg>
<div class="t" style="left:216.00px;top:637.64px;font-size:15px;line-height:19px;color:#1e1e1e;font-weight:400;letter-spacing:0.196px;">executives to regularly analyze the human resource side of the business to recognize if</div>
<div class="t" style="left:216.00px;top:655.22px;font-size:15px;line-height:19px;color:#1e1e1e;font-weight:400;letter-spacing:0.372px;">there is room for improvement.</div>
<div class="r" style="left:121px;top:680px;width:815px;height:26px;overflow:hidden;">
<div class="t" style="left:95.00px;top:8.72px;font-size:34px;line-height:42px;color:#0a0a0a;font-weight:400;letter-spacing:-2.513px;-webkit-text-stroke:1.1px #0a0a0a;">Human Resource Development Vs. Human</div>
</div>
<div class="r" style="left:936px;top:386px;width:3px;height:94px;background:#2b7cd3;"></div>
<svg class="r" style="left:947px;top:390px;" width="24" height="24" viewBox="0 0 24 24"><circle cx="12" cy="12" r="12" fill="#2b7cd3"/></svg>
<div class="t" style="left:953.50px;top:397.04px;font-size:10px;line-height:12px;color:#ffffff;font-weight:400;letter-spacing:-1.891px;">RB</div>
<div class="t" style="left:981.50px;top:391.84px;font-size:12px;line-height:15px;color:#111;font-weight:700;letter-spacing:-0.432px;">Ryan Brinks</div>
<div class="t" style="left:981.50px;top:405.84px;font-size:12px;line-height:15px;color:#111;font-weight:400;letter-spacing:-0.026px;">@geraldainomugisha@gmail.com FYI our</div>
<div class="t" style="left:981.50px;top:419.62px;font-size:12px;line-height:15px;color:#111;font-weight:400;letter-spacing:-0.021px;">content guidelines say this should be 100</div>
<div class="t" style="left:981.50px;top:433.40px;font-size:12px;line-height:15px;color:#111;font-weight:400;letter-spacing:-0.030px;">characters or less. I&#x27;ve edited it this time.</div>
<div class="r" style="left:936px;top:602px;width:3px;height:105px;background:#2b7cd3;"></div>
<svg class="r" style="left:947px;top:606px;" width="24" height="24" viewBox="0 0 24 24"><circle cx="12" cy="12" r="12" fill="#2b7cd3"/></svg>
<div class="t" style="left:953.50px;top:613.03px;font-size:10px;line-height:12px;color:#ffffff;font-weight:400;letter-spacing:-1.891px;">RB</div>
<div class="t" style="left:981.50px;top:607.84px;font-size:12px;line-height:15px;color:#111;font-weight:700;letter-spacing:-0.432px;">Ryan Brinks</div>
<div class="t" style="left:981.50px;top:621.84px;font-size:12px;line-height:15px;color:#111;font-weight:400;letter-spacing:-0.023px;">@geraldainomugisha@gmail.com I changed this</div>
<div class="t" style="left:981.50px;top:635.62px;font-size:12px;line-height:15px;color:#111;font-weight:400;letter-spacing:-0.028px;">from &quot;imperative&quot; to &quot;important&quot;. Please avoid</div>
<div class="t" style="left:981.50px;top:649.40px;font-size:12px;line-height:15px;color:#111;font-weight:400;letter-spacing:-0.023px;">using words like &quot;must&quot;, &quot;imperative&quot;, &quot;always&quot;,</div>
<div class="t" style="left:981.50px;top:663.18px;font-size:12px;line-height:15px;color:#111;font-weight:400;letter-spacing:-0.014px;">&quot;never&quot;, etc. We want to give people facts and</div>
<div class="t" style="left:981.50px;top:676.96px;font-size:12px;line-height:15px;color:#111;font-weight:400;letter-spacing:-0.020px;">options, not tell them they &quot;have to&quot; do</div>
<div class="t" style="left:981.50px;top:690.74px;font-size:12px;line-height:15px;color:#111;font-weight:400;letter-spacing:-0.132px;">something.</div>
<div class="r" style="left:993px;top:634px;width:168px;height:1px;background:#2b7cd3;"></div>
<div class="r" style="left:1350px;top:183px;width:15px;height:523px;background:rgba(0,0,0,0.045);"></div>
<div class="r" style="left:1350px;top:183px;width:15px;height:15px;background:#ffffff;box-sizing:border-box;border:1px solid #b8b8b8;"></div>
<svg class="r" style="left:1353px;top:188px;" width="9" height="5" viewBox="0 0 9 5"><path d="M0 5 L4.5 0 L9 5 Z" fill="#555"/></svg>
<div class="r" style="left:1350px;top:198px;width:15px;height:26px;background:#ffffff;box-sizing:border-box;border:1px solid #b8b8b8;"></div>
<div class="r" style="left:1350px;top:690px;width:15px;height:14px;background:#ffffff;box-sizing:border-box;border:1px solid #b0b0b0;"></div>
<svg class="r" style="left:1353px;top:694px;" width="9" height="5" viewBox="0 0 9 5"><path d="M0 0 L4.5 5 L9 0 Z" fill="#555"/></svg>
<div class="t" style="left:8.40px;top:709.84px;font-size:12px;line-height:15px;color:#444444;font-weight:400;letter-spacing:-0.514px;">Page 1 of 9</div>
<div class="t" style="left:84.30px;top:709.84px;font-size:12px;line-height:15px;color:#444444;font-weight:400;letter-spacing:-0.448px;">2419 words</div>
<svg class="r" style="left:161px;top:710px;" width="17" height="14" viewBox="0 0 17 14"><path d="M1 2 Q4 0.5 7.5 2 V12.5 Q4 11 1 12.5 Z" fill="none" stroke="#555"/><path d="M7.5 2 Q9 1 10 1.2 M7.5 12.5 Q9 11.5 10 11.7" fill="none" stroke="#555"/><path d="M10.5 4 L15 9 M15 4 L10.5 9" stroke="#555" stroke-width="1.1"/></svg>
<div class="t" style="left:193.70px;top:709.84px;font-size:12px;line-height:15px;color:#444444;font-weight:400;letter-spacing:-0.364px;">English (United States)</div>
<svg class="r" style="left:329px;top:710px;" width="14" height="13" viewBox="0 0 14 13"><circle cx="3" cy="3" r="2.5" fill="#555"/><rect x="0.5" y="5.5" width="12" height="7" fill="none" stroke="#555"/><path d="M3 8 H11 M3 10.5 H11 M5.5 6 V12 M8.5 6 V12" stroke="#555" stroke-width="0.8"/><rect x="6" y="1" width="7" height="3" fill="#555"/></svg>
<svg class="r" style="left:1078px;top:710px;" width="15" height="14" viewBox="0 0 15 14"><path d="M0.5 1.5 Q4 0.5 7 2 Q10 0.5 13.5 1.5 V12.5 Q10 11.5 7 13 Q4 11.5 0.5 12.5 Z" fill="none" stroke="#555"/><line x1="7" y1="2" x2="7" y2="13" stroke="#555"/><path d="M2.5 4.5 H5 M2.5 7 H5 M2.5 9.5 H5 M9 4.5 H11.5 M9 7 H11.5 M9 9.5 H11.5" stroke="#555" stroke-width="0.9"/></svg>
<div class="r" style="left:1106px;top:706px;width:40px;height:21px;background:#c8c8c8;"></div>
<svg class="r" style="left:1118px;top:710px;" width="15" height="13" viewBox="0 0 15 13"><rect x="0.5" y="0.5" width="14" height="12" fill="none" stroke="#555"/><path d="M3 3.5 H12 M3 6 H12 M3 8.5 H12 M3 11 H12" stroke="#555" stroke-width="1"/></svg>
<svg class="r" style="left:1158px;top:710px;" width="16" height="14" viewBox="0 0 16 14"><path d="M0.5 0.5 H10.5 V6 M0.5 0.5 V12.5 H7" fill="none" stroke="#555"/><path d="M2.5 3 H8.5 M2.5 5.5 H8.5 M2.5 8 H6" stroke="#555" stroke-width="0.9"/><circle cx="11.5" cy="9.5" r="4" fill="#666"/><path d="M9 8 Q11.5 10 13.5 8.5 M11 6 V13" stroke="#f3f3f3" stroke-width="0.8" fill="none"/></svg>
<div class="r" style="left:1192px;top:716px;width:8px;height:1px;background:#444;"></div>
<div class="r" style="left:1205px;top:716px;width:100px;height:1px;background:#555;"></div>
<div class="r" style="left:1253px;top:712px;width:5px;height:11px;background:#555;"></div>
<div class="r" style="left:1310px;top:716px;width:8px;height:1px;background:#444;"></div>
<div class="r" style="left:1313.5px;top:712.5px;width:1px;height:8px;background:#444;"></div>
<div class="t" style="left:1331.50px;top:709.64px;font-size:12px;line-height:15px;color:#444444;font-weight:400;letter-spacing:-1.396px;">100%</div>
<svg class="r" style="left:15px;top:739px;" width="18" height="18" viewBox="0 0 18 18"><path d="M0 2.5 L7.5 1.5 V8.3 H0 Z M8.5 1.3 L17 0 V8.3 H8.5 Z M0 9.3 H7.5 V16.3 L0 15.3 Z M8.5 9.3 H17 V17.5 L8.5 16.4 Z" fill="#fff"/></svg>
<svg class="r" style="left:63px;top:739px;" width="18" height="17" viewBox="0 0 18 17"><rect x="1.5" y="4.5" width="10" height="8" fill="none" stroke="#fff" stroke-width="1.2"/><path d="M1 2 H12 M1 15 H12" stroke="#fff" stroke-width="1.2"/><rect x="14.5" y="4" width="2.5" height="3" fill="#fff"/><path d="M15.7 1 V3 M15.7 8 V16" stroke="#fff" stroke-width="1.1"/></svg>
<svg class="r" style="left:110px;top:735px;" width="25" height="26" viewBox="0 0 25 26"><path d="M7 7 V3.5 Q7 1.5 9 1.5 H16 Q18 1.5 18 3.5 V7" fill="none" stroke="#e8e8e8" stroke-width="1.6"/><rect x="1" y="7" width="23" height="18" fill="#f0f0f0"/><rect x="8" y="11" width="4" height="4" fill="#d35f21"/><rect x="13" y="11" width="4" height="4" fill="#7fa125"/><rect x="8" y="16" width="4" height="4" fill="#1e88e5"/><rect x="13" y="16" width="4" height="4" fill="#f5b82e"/></svg>
<svg class="r" style="left:159px;top:736px;" width="26" height="24" viewBox="0 0 26 24"><path d="M1 9 L13 0.5 L25 9 V23 H1 Z" fill="#1e73d1"/><path d="M3 9 H23 L13 16 Z" fill="#f2f2f2"/><path d="M1 9 L13 18 L25 9 V23 H1 Z" fill="#2a88e0"/></svg>
<div class="r" style="left:152px;top:766px;width:40px;height:2px;background:#6c9bd2;"></div>
<svg class="r" style="left:208px;top:735px;" width="27" height="26" viewBox="0 0 27 26"><circle cx="13" cy="13" r="12.3" fill="#1a8ad8"/><path d="M4 18 Q6 8 15 8 Q22 8 24 13 Q22 10 17 11 Q11 12 12 17 Q13 22 21 21 Q17 25 12 25 Q6 24 4 18 Z" fill="#2b5cab"/><path d="M15 8 Q22 8 24.5 14 Q23 19 17 17 Q20 14 17 12 Z" fill="#6fcf8a" opacity="0.7"/></svg>
<svg class="r" style="left:258px;top:738px;" width="23" height="19" viewBox="0 0 23 19"><path d="M0.5 1 H8 L10 3 H22.5 V18.5 H0.5 Z" fill="#f5c85a"/><rect x="0.5" y="4.5" width="22" height="14" fill="#f9d573"/><rect x="6" y="10" width="11" height="8.5" fill="#1e88e5"/><rect x="8.5" y="13" width="6" height="4" fill="#f9d573"/></svg>
<div class="r" style="left:250px;top:766px;width:40px;height:2px;background:#6c9bd2;"></div>
<svg class="r" style="left:309px;top:735px;" width="19" height="24" viewBox="0 0 19 24"><rect x="0.5" y="1" width="18" height="22" fill="#1e6fc7"/><rect x="2" y="3" width="15" height="12" fill="#2a5a9a"/><text x="9.5" y="12" font-family="Liberation Sans" font-size="6.5" font-weight="700" fill="#e8f0ff" text-anchor="middle">LMS</text><path d="M6 20 Q9.5 17 13 20" stroke="#8fc0f0" fill="none"/></svg>
<svg class="r" style="left:355px;top:736px;" width="26" height="24" viewBox="0 0 26 24"><path d="M0.5 4 L24 0.5 V4 H0.5 Z" fill="#3d9be9"/><rect x="0.5" y="4" width="25" height="19" fill="#1e73d1"/><path d="M9 8 L18 13.5 L9 19 Z" fill="#f0f0f0"/></svg>
<div class="r" style="left:348px;top:766px;width:40px;height:2px;background:#6c9bd2;"></div>
<svg class="r" style="left:405px;top:736px;" width="24" height="24" viewBox="0 0 24 24"><circle cx="12" cy="12" r="11.5" fill="#d35b2a"/><path d="M12 12 L2 6.5 A11.5 11.5 0 0 0 9 23.1 Z" fill="#2f7b6a"/><path d="M12 12 L9 23.1 A11.5 11.5 0 0 0 22.5 7 Z" fill="#f0c24a"/><circle cx="12" cy="12" r="5.3" fill="#f0f0f0"/><circle cx="12" cy="12" r="4.2" fill="#3a82e0"/></svg>
<div class="r" style="left:397px;top:766px;width:40px;height:2px;background:#6c9bd2;"></div>
<div class="r" style="left:442px;top:728px;width:48px;height:40px;background:#c0622a;"></div>
<svg class="r" style="left:454px;top:735px;" width="24" height="24" viewBox="0 0 24 24"><circle cx="12" cy="12" r="11.5" fill="#2a8fe0"/><path d="M5 12.5 L17.5 7 L15 16 Z" fill="#fff"/></svg>
<div class="r" style="left:463px;top:752px;width:16px;height:9px;background:#2a8fe0;border-radius:2px"></div>
<div class="t" style="left:463.75px;top:751.71px;font-size:9.5px;line-height:12px;color:#f0e0c8;font-weight:400;letter-spacing:-0.672px;">709</div>
<div class="r" style="left:442px;top:766px;width:48px;height:2px;background:#c0622a;"></div>
<div class="r" style="left:490px;top:728px;width:46px;height:40px;background:#4a4747;"></div>
<div class="r" style="left:535px;top:728px;width:3px;height:40px;background:#3a3737;"></div>
<svg class="r" style="left:503px;top:737px;" width="24" height="22" viewBox="0 0 24 22"><rect x="6" y="0.5" width="18" height="21" fill="#2b7cd3"/><rect x="6" y="7" width="18" height="7" fill="#1f5fb0"/><rect x="0" y="5" width="12" height="12" fill="#1a5cb8"/><text x="6" y="14.5" font-family="Liberation Sans" font-size="10" font-weight="700" fill="#fff" text-anchor="middle">W</text></svg>
<div class="r" style="left:491px;top:766px;width:47px;height:2px;background:#7aaee8;"></div>
<svg class="r" style="left:553px;top:737px;" width="22" height="21" viewBox="0 0 22 21"><path d="M6 2 L19 0.5 L21.5 4 V17 L8 20 L0.5 16 V6 Z" fill="#c9c9c9"/><path d="M6 2 L19 0.5 L21.5 4 L9 6 Z" fill="#e6e6e6"/><rect x="10" y="4.5" width="5" height="6" fill="#355"/><rect x="11" y="5.5" width="3" height="3" fill="#3ab0c0"/><rect x="2" y="11" width="4" height="5" fill="#eee"/><rect x="8" y="12" width="4" height="5" fill="#eee"/></svg>
<div class="r" style="left:544px;top:766px;width:40px;height:2px;background:#6c9bd2;"></div>
<svg class="r" style="left:1050px;top:740px;" width="24" height="17" viewBox="0 0 24 17"><path d="M5 15 Q0.5 15 1 10.5 Q1.5 7 5 7.5 Q6 2 11.5 2 Q17 2 18 7 Q23 7 23 11 Q23 15 18.5 15 Z" fill="#e8e8e8"/><path d="M10 12 L13 12 L11.5 16 Z" fill="#3a8ee0"/><circle cx="11.5" cy="13" r="2.2" fill="#3a8ee0"/></svg>
<div class="t" style="left:1082.20px;top:741.80px;font-size:13px;line-height:16px;color:#ffffff;font-weight:400;letter-spacing:-0.188px;">23°C</div>
<div class="t" style="left:1120.50px;top:741.80px;font-size:13px;line-height:16px;color:#ffffff;font-weight:400;letter-spacing:0.344px;">Light rain</div>
<svg class="r" style="left:1194px;top:744px;" width="13" height="8" viewBox="0 0 13 8"><path d="M0.5 7 L6.5 1 L12.5 7" fill="none" stroke="#fff" stroke-width="1.2"/></svg>
<div class="t" style="left:1219.40px;top:741.44px;font-size:12px;line-height:15px;color:#ffffff;font-weight:400;letter-spacing:-2.200px;">ENG</div>
<div class="t" style="left:1257.50px;top:732.14px;font-size:12px;line-height:15px;color:#ffffff;font-weight:400;letter-spacing:-0.578px;">12:38 PM</div>
<div class="t" style="left:1252.60px;top:750.04px;font-size:12px;line-height:15px;color:#ffffff;font-weight:400;letter-spacing:-0.381px;">10/20/2021</div>
<svg class="r" style="left:1324px;top:740px;" width="26" height="25" viewBox="0 0 26 25"><path d="M1 1 H19 V13 H8 L4 17 V13 H1 Z" fill="#fff"/><path d="M4 4.5 H16 M4 7.5 H16 M4 10.5 H12" stroke="#1f1b1b" stroke-width="1"/><circle cx="17" cy="15.5" r="8.2" fill="#1f1b1b" stroke="#8a8a8a" stroke-width="1.3"/></svg>
<div class="t" style="left:1338.00px;top:749.69px;font-size:11px;line-height:14px;color:#ffffff;font-weight:700;letter-spacing:0.000px;">1</div>
<div class="r" style="left:1362px;top:728px;width:1px;height:40px;background:#5a5555;"></div>
</body></html>
